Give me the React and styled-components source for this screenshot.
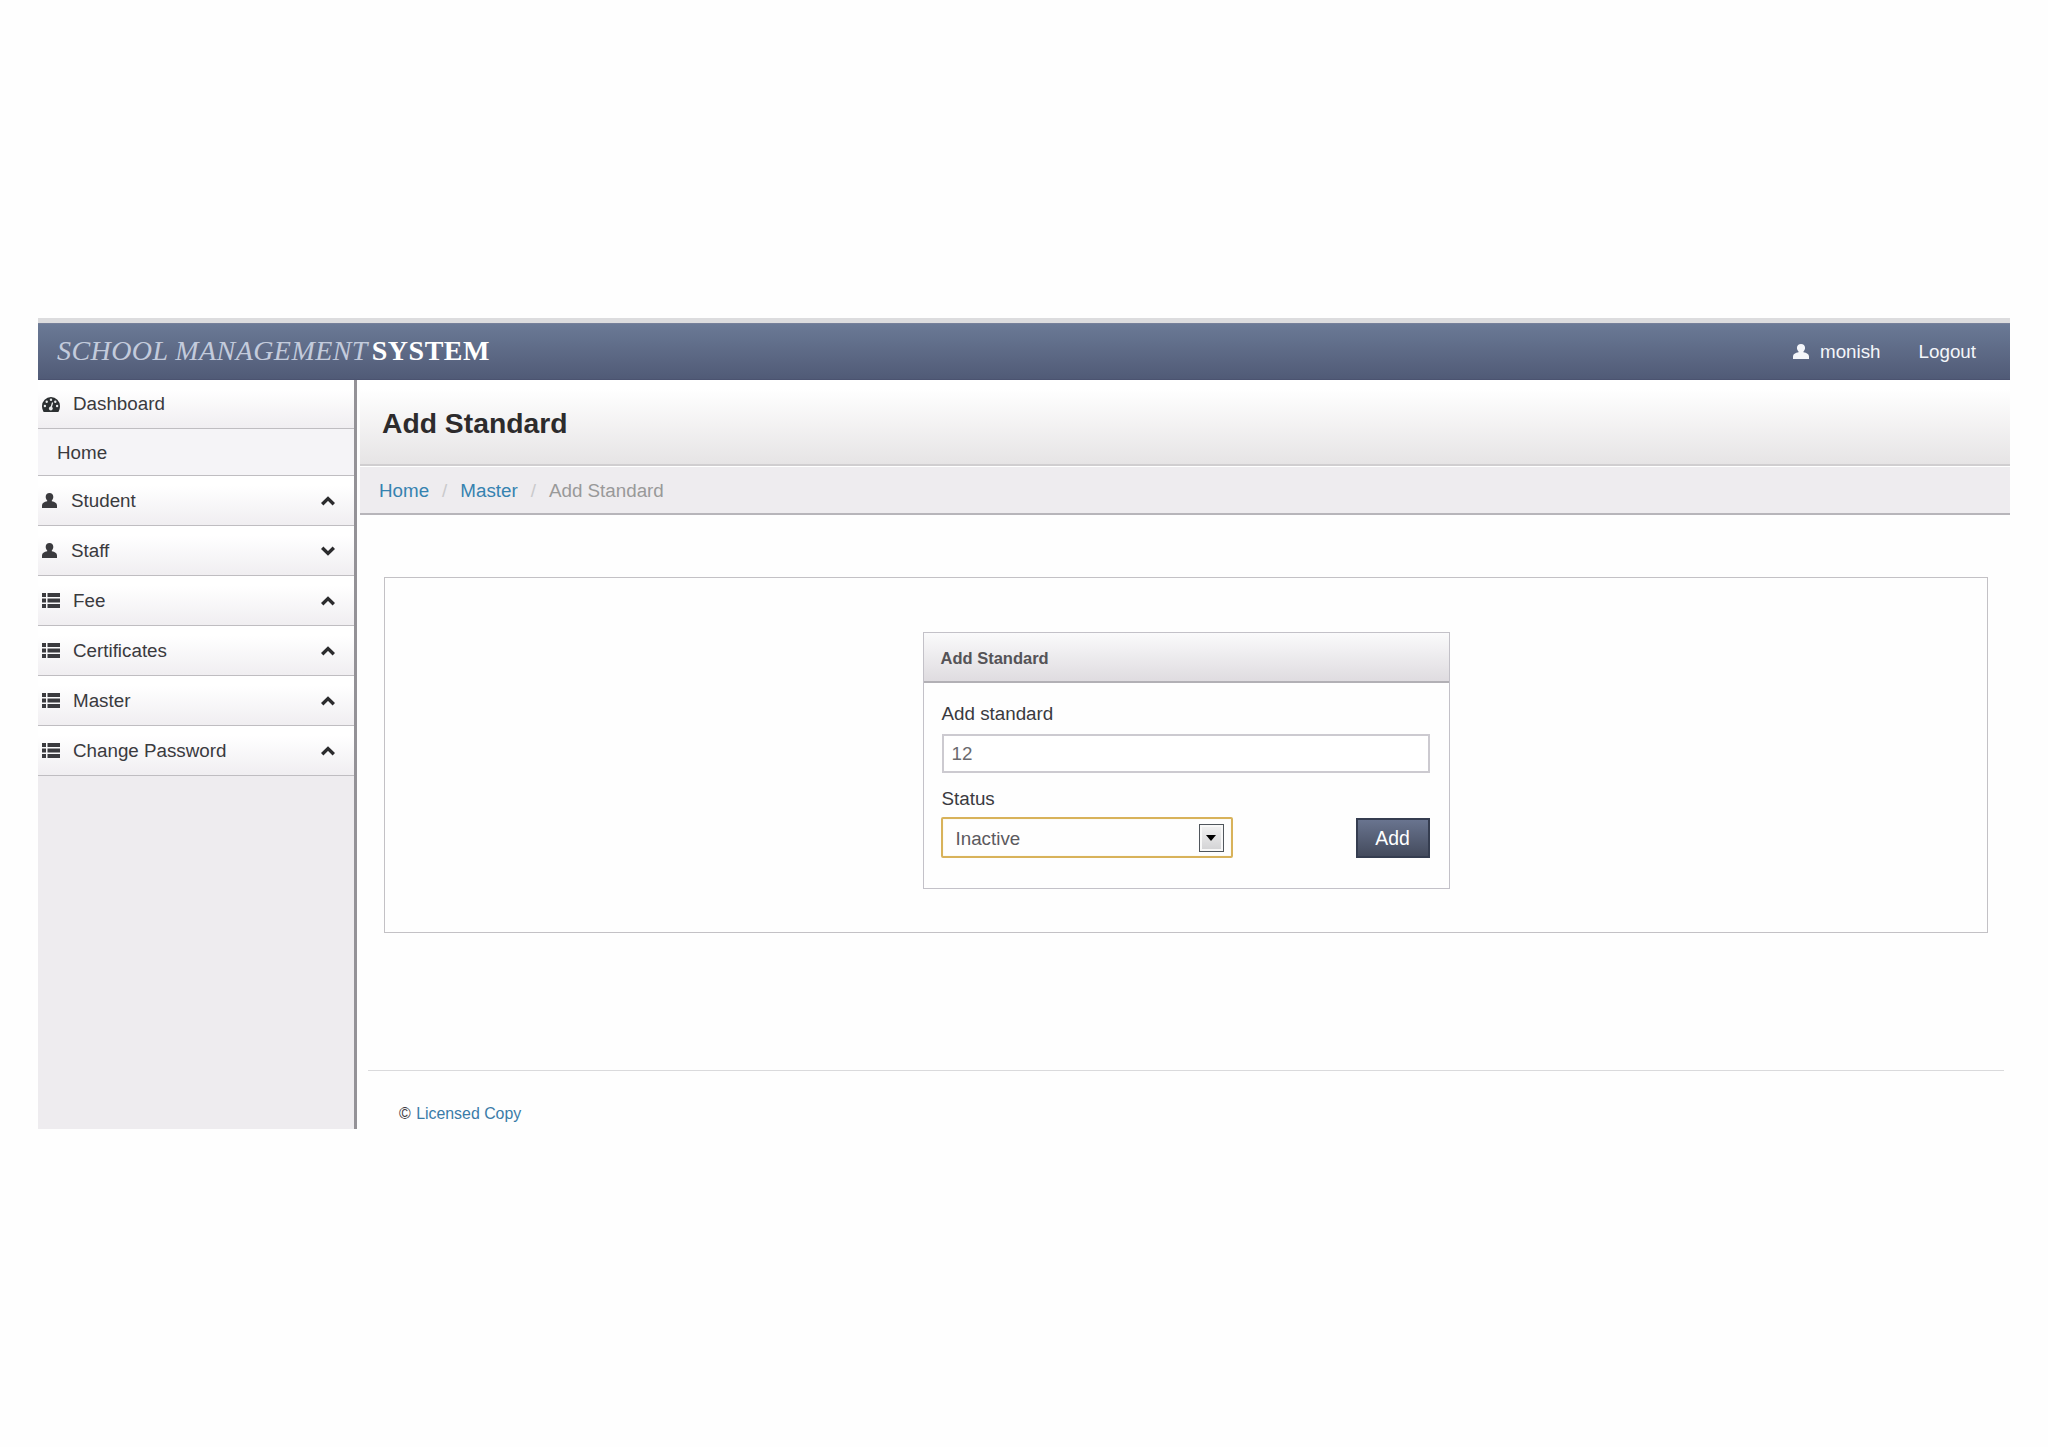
import React from 'react';
import styled, { createGlobalStyle } from 'styled-components';

const GlobalStyle = createGlobalStyle`
  * {
    box-sizing: border-box;
  }
  body {
    margin: 0;
    background: #fefefe;
    font-family: "Liberation Sans", Arial, sans-serif;
    font-size: 18.8px;
    color: #3a3a3e;
  }
  a {
    text-decoration: none;
  }
`

const Page = styled.div`
  width: 2048px;
  height: 1447px;
  padding: 318px 38px 0;
`

const Header = styled.header`
  display: flex;
  justify-content: space-between;
  align-items: center;
  height: 62px;
  padding: 0 34px 0 19px;
  border-top: 5px solid #dcdcde;
  background: linear-gradient(to bottom, #6b7a96, #505a76) padding-box;
  box-shadow: inset 0 1px 0 #76809a, inset 0 -1px 0 #4b5370;
`

const Brand = styled.div`
  display: flex;
  gap: 4px;
  padding-bottom: 2px;
  font-family: "Liberation Serif", Georgia, serif;
  font-size: 28px;
  line-height: 36px;
  white-space: nowrap;
  i {
    color: #c3cbdc;
    letter-spacing: .42px;
  }
  b {
    color: #fff;
    letter-spacing: .5px;
  }
`

const UserNav = styled.nav`
  display: flex;
  align-items: center;
  color: #f4f6fa;
  .name {
    margin: 0 38px 0 11px;
  }
`

const Body = styled.div`
  display: flex;
  height: 749px;
`

const Sidebar = styled.aside`
  width: 319px;
  background: #eeecef;
  border-right: 3px solid #949297;
`

const MenuItem = styled.div`
  display: flex;
  align-items: center;
  height: ${p => p.$height || 50}px;
  padding: 0 19px 0 4px;
  border-bottom: 1px solid #bfbdc1;
  background: linear-gradient(to bottom, #fff 20%, #f0eef1);
  .label {
    flex: 1;
    margin-left: ${p => p.$gap}px;
  }
`

const SubItem = styled.div`
  height: 47px;
  padding-left: 19px;
  line-height: 48px;
  background: #f5f4f7;
  border-bottom: 1px solid #bfbdc1;
`

const Main = styled.main`
  flex: 1;
  padding-left: 3px;
`

const PageTitle = styled.h1`
  height: 86px;
  margin: 0;
  padding-left: 22px;
  font-size: 28.3px;
  line-height: 86px;
  color: #2d2b2c;
  background: linear-gradient(to bottom, #fff 10%, #e6e4e5);
  border-bottom: 2px solid #d0ced0;
`

const Breadcrumb = styled.div`
  display: flex;
  height: 49px;
  padding-left: 19px;
  line-height: 47px;
  color: #999;
  background: #eeecef;
  border-top: 1px solid #fff;
  border-bottom: 2px solid #b7b5ba;
  a {
    color: #3582b0;
  }
  .divider {
    margin: 0 13px 0 13px;
    color: #c9c9cb;
  }
`

const Well = styled.section`
  display: flex;
  justify-content: center;
  width: 1604px;
  height: 356px;
  margin: 62px 0 0 24px;
  padding-top: 54px;
  border: 1px solid #c3c1c5;
`

const Panel = styled.form`
  width: 527px;
  height: 257px;
  border: 1px solid #c3c1c8;
`

const PanelTitle = styled.h2`
  height: 50px;
  margin: 0;
  padding-left: 17px;
  font-size: 16.5px;
  line-height: 50px;
  color: #555357;
  background: linear-gradient(to bottom, #fafafb, #dfdce0);
  border-bottom: 2px solid #b2b0b5;
`

const Fields = styled.div`
  padding: 17px 19px 0 18px;
  label {
    display: block;
    line-height: 28px;
  }
`

const TextInput = styled.input`
  display: block;
  width: 488px;
  height: 39px;
  margin: 6px 0 12px;
  padding: 0 8px;
  border: 2px solid #cccad0;
  background: #fff;
  font: inherit;
  color: #6a6a6e;
`

const FormRow = styled.div`
  display: flex;
  justify-content: space-between;
  align-items: center;
  margin: 4px 0 0 -1px;
`

const Select = styled.div`
  display: flex;
  justify-content: space-between;
  align-items: center;
  width: 292px;
  height: 41px;
  padding: 0 7px 0 13px;
  border: 2px solid #d8b25a;
  border-radius: 2px;
  box-shadow: inset 0 0 1px #ecd9a4;
  color: #5c5a5e;
  .value {
    padding-top: 2px;
  }
`

const SelectArrow = styled.span`
  display: flex;
  align-items: center;
  justify-content: center;
  width: 25px;
  height: 28px;
  border: 1px solid #50565c;
  box-shadow: inset 0 0 0 2px #f8f8f8;
  background: linear-gradient(to bottom, #f2f2f2, #d2d2d4);
`

const AddButton = styled.button`
  width: 74px;
  height: 40px;
  padding: 1px 0 0;
  border: 2px solid #353d50;
  background: linear-gradient(to bottom, #69748f, #444b5d);
  font: inherit;
  font-size: 19.4px;
  color: #fff;
`

const Footer = styled.footer`
  width: 1636px;
  margin: 137px 0 0 8px;
  padding: 33px 0 0 31px;
  border-top: 1px solid #dadadc;
  font-size: 15.9px;
  line-height: 20px;
  a {
    color: #3a7ca8;
    margin-left: 1px;
  }
`

const UserIcon = ({ w = 15, h = 15 }) => (
  <svg width={w} height={h} viewBox="0 0 15 15" preserveAspectRatio="none" fill="currentColor">
    <path d="M7.5 0C9.8 0 11.3 1.600 11.3 3.800C11.3 5.400 10.7 6.600 9.8 7.500V8.300C12.800 8.900 15 10 15 12.400V15H0V12.400C0 10 2.200 8.900 5.200 8.300V7.500C4.300 6.600 3.700 5.400 3.700 3.800C3.700 1.600 5.200 0 7.500 0Z" />
  </svg>
)

const ListIcon = () => (
  <svg width="18" height="15" viewBox="0 0 18 15" fill="currentColor">
    <path d="M0 0h4v4H0zM5.500 0H18v4H5.500zM0 5.500h4v4H0zM5.500 5.500H18v4H5.500zM0 11h4v4H0zM5.500 11H18v4H5.500z" />
  </svg>
)

const DashboardIcon = () => (
  <svg width="18" height="15" viewBox="0 0 18 15">
    <path d="M9 0a9 9 0 0 1 9 9c0 2.200-.6 4.200-1.600 6H1.600A11 11 0 0 1 0 9a9 9 0 0 1 9-9z" fill="#2b2f31" />
    <g fill="#e8eaea">
      <circle cx="2.900" cy="9" r="1.200" />
      <circle cx="4.700" cy="4.700" r="1.200" />
      <circle cx="9" cy="2.800" r="1.200" />
      <circle cx="13.300" cy="4.700" r="1.200" />
      <circle cx="15.100" cy="9" r="1.200" />
      <circle cx="8.800" cy="11.500" r="1.900" />
    </g>
    <path d="M8.800 11.500L10.600 5.500" stroke="#e8eaea" strokeWidth="1.300" />
  </svg>
)

const Chevron = ({ down }) => (
  <svg width="14" height="10" viewBox="0 0 14 10" fill="none" stroke="#2b2b2d" strokeWidth="3.400">
    <path d={down ? "M1.200 1.700L7 7.400L12.800 1.700" : "M1.200 8.300L7 2.600L12.800 8.300"} />
  </svg>
)

const menu = [
  { label: 'Student', user: true },
  { label: 'Staff', user: true, down: true },
  { label: 'Fee' },
  { label: 'Certificates' },
  { label: 'Master' },
  { label: 'Change Password' },
]

const App = () => {
  return (
    <Page>
      <GlobalStyle />
      <Header>
        <Brand><i>SCHOOL MANAGEMENT</i><b>SYSTEM</b></Brand>
        <UserNav>
          <UserIcon w={16} />
          <span className="name">monish</span>
          <span>Logout</span>
        </UserNav>
      </Header>
      <Body>
        <Sidebar>
          <MenuItem $height={49} $gap={13}>
            <DashboardIcon />
            <span className="label">Dashboard</span>
          </MenuItem>
          <SubItem>Home</SubItem>
          {menu.map(item => (
            <MenuItem key={item.label} $gap={item.user ? 14 : 13}>
              {item.user ? <UserIcon /> : <ListIcon />}
              <span className="label">{item.label}</span>
              <Chevron down={item.down} />
            </MenuItem>
          ))}
        </Sidebar>
        <Main>
          <PageTitle>Add Standard</PageTitle>
          <Breadcrumb>
            <a href="#">Home</a>
            <span className="divider">/</span>
            <a href="#">Master</a>
            <span className="divider">/</span>
            <span>Add Standard</span>
          </Breadcrumb>
          <Well>
            <Panel>
              <PanelTitle>Add Standard</PanelTitle>
              <Fields>
                <label>Add standard</label>
                <TextInput defaultValue="12" />
                <label>Status</label>
                <FormRow>
                  <Select>
                    <span className="value">Inactive</span>
                    <SelectArrow>
                      <svg width="10" height="6" viewBox="0 0 10 6"><path d="M0 0H10L5 6Z" /></svg>
                    </SelectArrow>
                  </Select>
                  <AddButton type="button">Add</AddButton>
                </FormRow>
              </Fields>
            </Panel>
          </Well>
          <Footer>© <a href="#">Licensed Copy</a></Footer>
        </Main>
      </Body>
    </Page>
  )
}

export default App;
